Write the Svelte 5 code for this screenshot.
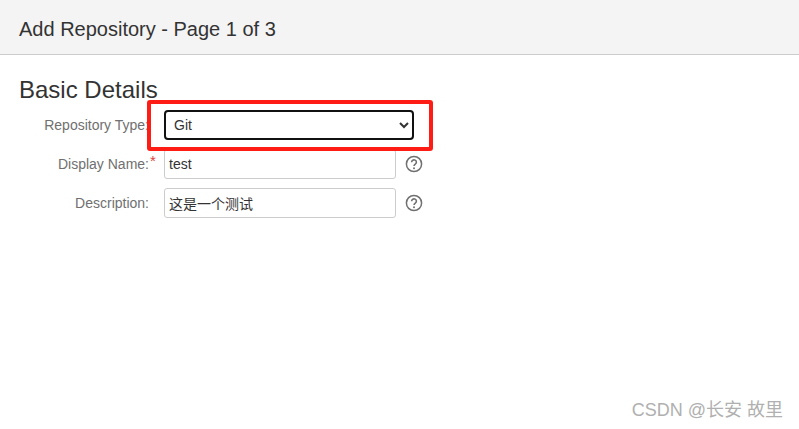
<script>
  const rows = [
    { label: 'Display Name:', value: 'test', required: true },
    { label: 'Description:', value: '这是一个测试', required: false }
  ];
</script>

<div class="page">
  <header class="head"><h1>Add Repository - Page 1 of 3</h1></header>
  <main class="body">
    <h2>Basic Details</h2>
    <div class="form">
      <div class="row">
        <span class="label">Repository Type:</span>
        <select class="select"><option>Git</option></select>
      </div>
      {#each rows as r}
        <div class="row">
          <span class="label">{r.label}{#if r.required}<span class="req">*</span>{/if}</span>
          <input class="input" value={r.value} />
          <svg class="help" width="18" height="18" viewBox="0 0 18 18" aria-hidden="true">
            <circle cx="9" cy="9" r="7.6" fill="none" stroke="#707070" stroke-width="1.5" />
            <path d="M6.6 7.2a2.4 2.3 0 1 1 3.7 1.9c-.9.6-1.3 1-1.3 2" fill="none" stroke="#707070" stroke-width="1.6" />
            <circle cx="9" cy="13.2" r="1" fill="#707070" />
          </svg>
        </div>
      {/each}
    </div>
  </main>
  <div class="mark"></div>
  <div class="wm">CSDN @长安 故里</div>
</div>

<style>
  :global(body) { margin: 0; background: #fff; }
  .page {
    position: relative;
    width: 799px;
    height: 429px;
    overflow: hidden;
    font-family: "Liberation Sans", "Noto Sans CJK SC", sans-serif;
    color: #333;
  }
  .head {
    height: 54px;
    box-sizing: content-box;
    background: #f4f4f4;
    border-bottom: 1px solid #ccc;
    display: flex;
    align-items: center;
    padding-left: 19px;
  }
  h1 { margin: 4px 0 0; font-size: 20px; font-weight: 400; line-height: 1.1; }
  .body { padding: 21px 0 0 19px; }
  h2 { margin: 0; font-size: 24px; font-weight: 400; line-height: 27px; }
  .form { display: flex; flex-direction: column; gap: 9px; margin-top: 7px; }
  .row { display: flex; align-items: center; height: 30px; margin-left: -19px; }
  .label {
    position: relative;
    width: 149px;
    text-align: right;
    font-size: 14px;
    color: #707070;
    white-space: nowrap;
  }
  .req { position: absolute; left: 150px; top: -4px; color: #e0413c; font-size: 15px; }
  .select, .input {
    box-sizing: border-box;
    margin-left: 15px;
    height: 30px;
    font: 14px "Liberation Sans", "Noto Sans CJK SC", sans-serif;
    color: #333;
    background: #fff;
  }
  .input { width: 232px; border: 1px solid #ccc; border-radius: 3px; padding: 0 4px; outline: none; }
  .select { width: 250px; border: 2px solid #111; border-radius: 4px; padding: 0 4px; outline: none; }
  .help { margin-left: 9px; }
  .mark {
    position: absolute;
    left: 147px;
    top: 100px;
    width: 286px;
    height: 51px;
    box-sizing: border-box;
    border: 4px solid #fe1c14;
    border-radius: 3px;
  }
  .wm {
    position: absolute;
    right: 16px;
    top: 395px;
    font-size: 18px;
    color: #b0b0b0;
    white-space: nowrap;
  }
</style>
